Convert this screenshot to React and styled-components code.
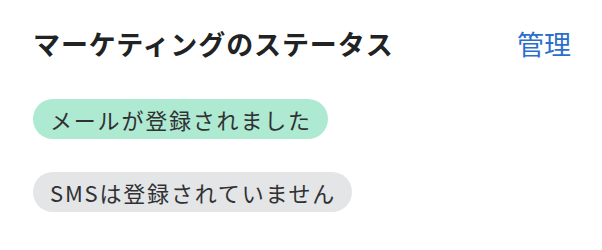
import React from 'react';
import styled, { createGlobalStyle } from 'styled-components';

const GlobalStyle = createGlobalStyle`
  body {
    margin: 0;
    background: #ffffff;
    font-family: "Noto Sans CJK JP", "Noto Sans", sans-serif;
  }
`;

const Card = styled.div`
  width: 602px;
  height: 250px;
  box-sizing: border-box;
  padding: 26px 31px 0 33px;
  background: #ffffff;
`;

const Header = styled.div`
  display: flex;
  justify-content: space-between;
  align-items: center;
`;

const Title = styled.h2`
  margin: 0;
  font-size: 27px;
  font-weight: 700;
  line-height: 36px;
  color: #202223;
  letter-spacing: 0.9px;
`;

const Manage = styled.a`
  font-size: 27px;
  line-height: 36px;
  color: #2c6ecb;
  text-decoration: none;
  cursor: pointer;
`;

const List = styled.div`
  display: flex;
  flex-direction: column;
  align-items: flex-start;
  gap: 33px;
  margin-top: 37px;
`;

const Badge = styled.span`
  display: inline-flex;
  align-items: center;
  height: 40px;
  padding: 0 16px 0 17px;
  border-radius: 20px;
  font-size: 22px;
  letter-spacing: 1.8px;
  color: #303133;
  background: ${p => (p.$tone === 'success' ? '#aee9d1' : '#e4e5e7')};
`;

function App() {
  return (
    <>
      <GlobalStyle />
      <Card>
        <Header>
          <Title>マーケティングのステータス</Title>
          <Manage>管理</Manage>
        </Header>
        <List>
          <Badge $tone="success">メールが登録されました</Badge>
          <Badge>SMSは登録されていません</Badge>
        </List>
      </Card>
    </>
  );
}

export default App;
